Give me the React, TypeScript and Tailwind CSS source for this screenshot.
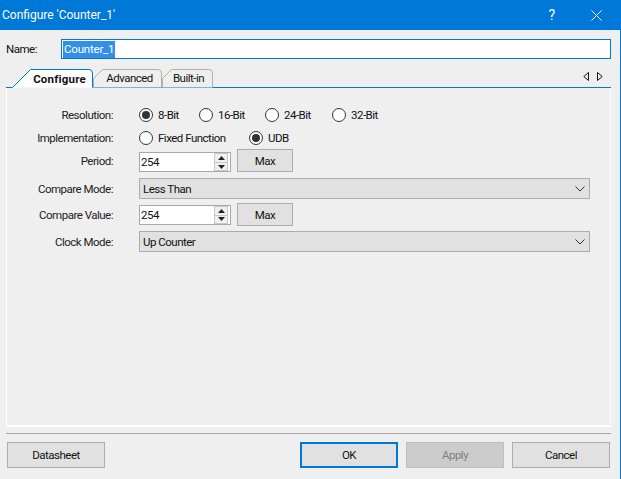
import React from "react";

function Radio({ label, checked, className = "" }: { label: string; checked?: boolean; className?: string }) {
  return (
    <div className={`flex items-center ${className}`}>
      <span className="w-[14px] h-[14px] rounded-full border border-[#333333] bg-white flex items-center justify-center shrink-0">
        {checked && <span className="w-[8px] h-[8px] rounded-full bg-[#333333]" />}
      </span>
      <span className="ml-[5px]">{label}</span>
    </div>
  );
}

function Label({ children }: { children: React.ReactNode }) {
  return <div className="w-[106px] text-right shrink-0 mr-[26px] text-[#222222]">{children}</div>;
}

function Spinner({ value }: { value: string }) {
  return (
    <div className="w-[92px] h-[20px] border border-[#a9a9a9] bg-white flex items-center justify-between pl-[1px] pr-[2px]">
      <span>{value}</span>
      <div className="w-[14px] h-[18px] flex flex-col items-center justify-between border border-[#c8c8c8] bg-[#c8c8c8]">
        <div className="h-[8px] w-full flex items-center justify-center bg-[#f0f0f0]">
          <svg width="7" height="4" viewBox="0 0 7 4"><path d="M3.5 0L7 4H0z" fill="#222" /></svg>
        </div>
        <div className="h-[7px] w-full flex items-center justify-center bg-[#f0f0f0]">
          <svg width="7" height="4" viewBox="0 0 7 4"><path d="M0 0H7L3.5 4z" fill="#222" /></svg>
        </div>
      </div>
    </div>
  );
}

function Select({ value }: { value: string }) {
  return (
    <div className="w-[451px] h-[21px] border border-[#adadad] bg-[#e1e1e1] flex items-center justify-between pl-[3px] pr-[4px]">
      <span>{value}</span>
      <svg width="10" height="6" viewBox="0 0 10 6">
        <path d="M0.5 0.5L5 5L9.5 0.5" fill="none" stroke="#333" strokeWidth="1" />
      </svg>
    </div>
  );
}

function Btn({ label, className = "" }: { label: string; className?: string }) {
  return (
    <div className={`w-[98px] h-[26px] flex items-center justify-center border border-[#adadad] bg-[#e1e1e1] ${className}`}>
      {label}
    </div>
  );
}

function Tab({ label, width, path, active, className = "" }: { label: string; width: number; path: string; active?: boolean; className?: string }) {
  return (
    <div className={`relative h-[19px] flex items-center justify-center ${active ? "font-bold tracking-[0.2px]" : ""} ${className}`} style={{ width }}>
      <svg className="absolute left-0 top-0" width={width} height={19} viewBox={`0 0 ${width} 19`}>
        <path d={path} fill={active ? "#ffffff" : "#efefef"} stroke={active ? "#0078d7" : "#b0b0b0"} strokeWidth="1" />
      </svg>
      <span className="relative">{label}</span>
    </div>
  );
}

export default function App() {
  return (
    <div className="w-[621px] h-[479px] bg-[#efefef] border-r border-[#0078d7] flex flex-col text-[11.5px] leading-[16px] tracking-[-0.5px] text-[#111111] overflow-hidden [font-family:'Roboto','Noto_Sans',sans-serif]">
      <div className="h-[30px] bg-[#0078d7] text-white flex items-center pl-[2px] shrink-0 text-[12px] tracking-normal">
        <span className="flex-1">Configure 'Counter_1'</span>
        <span className="text-[14px] mr-[36px]">?</span>
        <svg width="11" height="11" viewBox="0 0 11 11" className="mr-[18px]">
          <path d="M0.5 0.5L10.5 10.5M10.5 0.5L0.5 10.5" stroke="#fff" strokeWidth="1" />
        </svg>
      </div>

      <div className="flex items-center h-[20px] mt-[9px] pl-[6px] shrink-0">
        <span className="w-[55px]">Name:</span>
        <div className="w-[550px] h-[20px] border border-[#0078d7] bg-white flex items-center pl-[1px]">
          <span className="bg-[#3390e8] text-white h-[17px] px-[1px] flex items-center tracking-[-0.2px]">Counter_1</span>
        </div>
      </div>

      <div className="flex items-end h-[19px] mt-[10px] ml-[6px] w-[605px] shrink-0 relative">
        <div className="w-[6px] border-b border-[#0078d7]" />
        <Tab label="Configure" width={81} active className="pl-[14px]" path="M0 18.5H0.5L18.5 0.5H77Q80.5 0.5 80.5 4V18.5" />
        <Tab label="Advanced" width={69} className="border-b border-[#0078d7] pl-[4px]" path="M0.5 18.5V9.5L9.5 0.5H65Q68.5 0.5 68.5 4V18.5" />
        <Tab label="Built-in" width={51} className="border-b border-[#0078d7] pl-[2px]" path="M0.5 18.5V9.5L9.5 0.5H47Q50.5 0.5 50.5 4V18.5" />
        <div className="flex-1 h-[19px] border-b border-[#0078d7] flex items-start justify-end pr-[8px] pt-[3px] gap-[8px]">
          <svg width="6" height="9" viewBox="0 0 6 9"><path d="M5.5 0.5V8.5L0.8 4.5z" fill="none" stroke="#111" /></svg>
          <svg width="6" height="9" viewBox="0 0 6 9"><path d="M0.5 0.5V8.5L5.2 4.5z" fill="none" stroke="#111" /></svg>
        </div>
      </div>

      <div className="ml-[6px] w-[605px] h-[339px] border-x border-b-2 border-white pt-[15px] shrink-0">
        <div className="flex items-center h-[23px]">
          <Label>Resolution:</Label>
          <Radio label="8-Bit" checked className="w-[60px]" />
          <Radio label="16-Bit" className="w-[66px]" />
          <Radio label="24-Bit" className="w-[67px]" />
          <Radio label="32-Bit" />
        </div>
        <div className="flex items-center h-[23px]">
          <Label>Implementation:</Label>
          <Radio label="Fixed Function" className="w-[110px]" />
          <Radio label="UDB" checked />
        </div>
        <div className="flex items-end h-[23px]">
          <Label><span className="relative top-[-3px]">Period:</span></Label>
          <Spinner value="254" />
          <div className="w-[56px] h-[23px] ml-[6px] border border-[#adadad] bg-[#e1e1e1] flex items-center justify-center">Max</div>
        </div>
        <div className="flex items-center h-[21px] mt-[6px]">
          <Label>Compare Mode:</Label>
          <Select value="Less Than" />
        </div>
        <div className="flex items-center h-[23px] mt-[4px]">
          <Label>Compare Value:</Label>
          <Spinner value="254" />
          <div className="w-[56px] h-[23px] ml-[6px] border border-[#adadad] bg-[#e1e1e1] flex items-center justify-center">Max</div>
        </div>
        <div className="flex items-center h-[21px] mt-[5px]">
          <Label>Clock Mode:</Label>
          <Select value="Up Counter" />
        </div>
      </div>

      <div className="ml-[6px] w-[605px] h-px bg-[#a8a8a8] mt-[6px] shrink-0" />

      <div className="flex items-center mt-[8px] pl-[7px] shrink-0">
        <Btn label="Datasheet" />
        <Btn label="OK" className="ml-[195px] !border-2 !border-[#0078d7]" />
        <Btn label="Apply" className="ml-[8px] !bg-[#cccccc] !border-[#bfbfbf] text-[#808080]" />
        <Btn label="Cancel" className="ml-[8px]" />
      </div>
    </div>
  );
}
